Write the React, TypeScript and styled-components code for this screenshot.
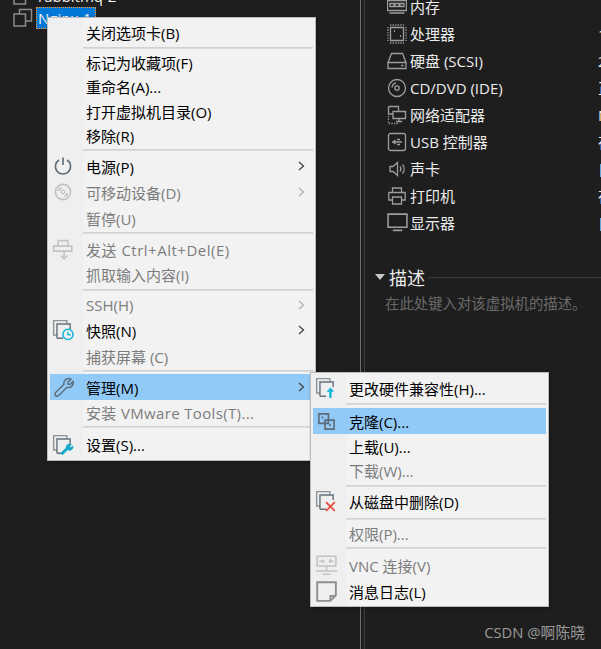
import React from 'react';
import styled, { createGlobalStyle } from 'styled-components';

const GlobalStyle = createGlobalStyle`
  html, body {
    margin: 0;
    padding: 0;
    background: #1e1e1e;
  }
  body {
    font-family: "Open Sans", "Noto Sans CJK SC", sans-serif;
    font-size: 15px;
  }
`;

const Page = styled.div`
  position: relative;
  display: flex;
  width: 601px;
  height: 649px;
  overflow: hidden;
  background: #1e1e1e;
`;

const Tree = styled.div`
  display: flex;
  flex-direction: column;
  width: 360px;
  margin-top: -15px;
  padding-left: 13px;
  box-sizing: border-box;
`;

const TreeRow = styled.div`
  display: flex;
  align-items: center;
  gap: 3px;
  height: 22px;
`;

const TreeLabel = styled.span<{ $selected?: boolean }>`
  display: block;
  padding: 0 3px 0 1px;
  line-height: 20px;
  color: #f4f4f4;
  border: 1px dotted ${(p) => (p.$selected ? '#ff9a2e' : 'transparent')};
  background: ${(p) => (p.$selected ? '#0078d7' : 'transparent')};
`;

const Rule = styled.div<{ $color: string; $gap: number }>`
  flex: none;
  width: 1px;
  margin-right: ${(p) => p.$gap}px;
  background: ${(p) => p.$color};
`;

const Details = styled.div`
  display: flex;
  flex-direction: column;
  flex: 1;
  min-width: 0;
  margin-top: -7px;
  overflow: hidden;
`;

const DeviceList = styled.div`
  display: flex;
  flex-direction: column;
  padding-left: 22px;
`;

const DeviceRow = styled.div`
  display: grid;
  grid-template-columns: 23px 188px auto;
  align-items: center;
  height: 27px;
  color: #ececec;
  white-space: nowrap;
`;

const SectionHead = styled.div`
  display: flex;
  align-items: center;
  margin-top: 28px;
  padding-left: 10px;
  font-size: 18px;
  color: #ececec;
`;

const Triangle = styled.span`
  width: 0;
  height: 0;
  margin-right: 4px;
  border-left: 5.5px solid transparent;
  border-right: 5.5px solid transparent;
  border-top: 6px solid #c8c8c8;
`;

const SectionLine = styled.span`
  flex: 1;
  height: 1px;
  margin-left: 3px;
  background: #3c3c3c;
`;

const Hint = styled.div`
  margin: 2px 0 0 20px;
  color: #6a6a6a;
  font-size: 14.4px;
  white-space: nowrap;
`;

const Menu = styled.div<{ $left: number; $top: number; $width: number }>`
  position: absolute;
  left: ${(p) => p.$left}px;
  top: ${(p) => p.$top}px;
  width: ${(p) => p.$width}px;
  box-sizing: border-box;
  display: flex;
  flex-direction: column;
  padding: 2px;
  background: linear-gradient(90deg, #efefef 35px, #f2f2f2 35px);
  border: 1px solid #bcbcbc;
  box-shadow: 1px 1px 3px rgba(0, 0, 0, 0.35);
`;

const Row = styled.div<{ $h: number; $active?: boolean; $off?: boolean; $track?: number }>`
  display: flex;
  align-items: center;
  height: ${(p) => p.$h}px;
  background: ${(p) => (p.$active ? '#91c9f7' : 'transparent')};
  color: ${(p) => (p.$off ? '#7c7c7c' : '#000')};
  letter-spacing: ${(p) => p.$track ?? 0}px;
  white-space: nowrap;
`;

const IconCell = styled.span`
  flex: none;
  display: flex;
  align-items: center;
  justify-content: center;
  width: 26px;
  margin-right: 10px;
`;

const RowLabel = styled.span`
  flex: 1;
`;

const Arrow = styled.span`
  display: flex;
  margin-right: 8px;
`;

const Separator = styled.div<{ $before: number; $after: number }>`
  height: 1px;
  margin: ${(p) => p.$before}px 0 ${(p) => p.$after}px 33px;
  background: #d2d2d2;
  box-shadow: 0 1px 0 #dcdcdc;
`;

const Watermark = styled.div`
  position: absolute;
  right: 16px;
  bottom: 7px;
  color: #9a9a9a;
  font-size: 14.8px;
`;

const Ico = ({ children, size = 20, color = '#66727d' }: { children: React.ReactNode; size?: number; color?: string }) => (
  <svg width={size} height={size} viewBox="0 0 20 20" fill="none" stroke={color} strokeWidth="1.3">
    {children}
  </svg>
);

const Windows = ({ color = '#66727d' }: { color?: string }) => (
  <>
    <path d="M4.5 14.5H1.5V1.5H13.5V4" stroke="#8d959c" />
    <path d="M4.5 17.5V4.5H16.5V9M10 17.5H4.5" stroke={color} />
  </>
);

const Power = () => (
  <Ico color="#5d6a76"><path strokeWidth="1.6" d="M6 4a7.6 7.6 0 1 0 8 0M10 1.5V9" /></Ico>
);
const Disc = () => (
  <Ico color="#c2c2c2"><circle cx="10" cy="10" r="7.6" strokeWidth="1.6" /><circle cx="10" cy="10" r="1.8" /><path strokeWidth="2" d="M5.5 9a4.5 4.5 0 0 1 3-3.4M14.5 11a4.5 4.5 0 0 1-3 3.4" /></Ico>
);
const SendKeys = () => (
  <Ico color="#c4c4c4" size={22}><path d="M5.5 1.5H14.5V6M1.5 6.5H18V11H1.5ZM5.5 6V1.5M11 11V17M8 15l3 3 3-3" strokeWidth="1.5" /></Ico>
);
const Snapshot = () => (
  <Ico size={22}><Windows /><circle cx="14.5" cy="14" r="4.6" fill="#f2f2f2" stroke="#13b5d8" strokeWidth="1.4" /><path d="M14.5 11.5V14.3H17" stroke="#13b5d8" /></Ico>
);
const Wrench = () => (
  <Ico size={22} color="#5a6d7e"><path strokeWidth="1.3" d="M12.2 3.6a4.4 4.4 0 0 1 5-.7L14.4 5.8l.2 1.8 1.8.2 2.8-2.8a4.4 4.4 0 0 1-5.6 5.3l-7.5 7.5a1.9 1.9 0 0 1-2.8-2.7l7.6-7.5a4.4 4.4 0 0 1 1.3-4.2Z" /></Ico>
);
const Settings = () => (
  <Ico size={22}><Windows /><path d="M8.5 18.5l6-6" stroke="#13a8cc" strokeWidth="2.6" /><path d="M13 12.5a3 3 0 0 1 4.5-3l-1.5 2 1 1 2-1.5a3 3 0 0 1-4 3.5Z" fill="#13a8cc" stroke="#13a8cc" strokeWidth="0.8" /></Ico>
);
const Upgrade = () => (
  <Ico size={22}><Windows /><path d="M14 19V12" stroke="#13b5d8" strokeWidth="2.2" /><path d="M10.5 13.5L14 9.5l3.5 4Z" fill="#13b5d8" stroke="none" /></Ico>
);
const Clone = () => (
  <Ico color="#5d6b77" size={19}><path strokeWidth="1.7" d="M2 2H12V12H2ZM8.5 8.5H18V18H8.5Z" /><path d="M5 5l1.5 1.5M13 13l1.5 1.5" strokeWidth="1.8" /></Ico>
);
const Remove = () => (
  <Ico size={22}><Windows /><path d="M10 11l8 8M18 11l-8 8" stroke="#e8453c" strokeWidth="1.5" /></Ico>
);
const Vnc = () => (
  <Ico size={22} color="#c2c2c2"><path strokeWidth="1.4" d="M2 2H19V11H2ZM1 15.5H20M10.5 11V15.5M7 18.5H14M4 6.5H8M6.5 5l1.5 1.5L6.5 8M17 6.5H13M14.5 5L13 6.5 14.5 8" /></Ico>
);
const Note = () => (
  <Ico size={22} color="#8f8f8f"><path strokeWidth="1.7" d="M2 2H19V14L14 19H2ZM14 19V14.5H19" /></Ico>
);
const ChevronRight = ({ color }: { color: string }) => (
  <svg width="7" height="10" viewBox="0 0 7 10" fill="none" stroke={color} strokeWidth="1.3"><path d="M1 1l4.5 4L1 9" /></svg>
);

const VmIcon = () => (
  <Ico color="#8a8a8a"><path strokeWidth="1.5" d="M1 6H12.5V18H1ZM6.5 6V1.5H18.5V13H12.5" /></Ico>
);

const Ram = () => <Ico color="#9d9d9d"><path d="M0.5 3.5H19.5V13.5H0.5ZM3 6.5H7V9.5H3ZM8 6.5H12V9.5H8ZM13 6.5H17V9.5H13ZM2.5 16H17.5" /></Ico>;
const Cpu = () => <Ico color="#9d9d9d"><path d="M3.5 3.5H16.5V16.5H3.5Z" /><path strokeDasharray="1.3 1.3" d="M3 1H17M3 19H17M1 3V17M19 3V17" /><path strokeWidth="1.8" d="M7 7h1M13 12h1" /></Ico>;
const Hdd = () => <Ico color="#9d9d9d"><path d="M4.5 2.5H15.5L19 11.5H1ZM1 11.5H19V17.5H1ZM14 14.5H16.5" /></Ico>;
const Cd = () => <Ico color="#9d9d9d"><circle cx="10" cy="10" r="8.5" /><circle cx="10" cy="10" r="2.2" /><path d="M5 9.5A5 5 0 0 1 9 5" /></Ico>;
const Network = () => <Ico color="#9d9d9d"><path d="M1.5 1.5H11.5V7M1.5 1.5V9H6M6 6.5H18.5V13.5H6ZM12 13.5V16M9 16.5H15" /><path strokeDasharray="1.3 1.3" d="M1.5 11V18.5H12" /></Ico>;
const Usb = () => <Ico color="#9d9d9d"><rect x="1.5" y="1.5" width="17" height="17" rx="2" /><path d="M5 10H15M6 10l2.5-2M6 10l2.5 2M10 7.5H13M10 12.5H13" /></Ico>;
const Speaker = () => <Ico color="#9d9d9d"><path d="M3 7.5H6L10.5 3.5V16.5L6 12.5H3ZM13 7.5a4 4 0 0 1 0 5M15.5 5.5a7 7 0 0 1 0 9" /></Ico>;
const Printer = () => <Ico color="#9d9d9d"><path d="M5.5 6.5V2H14.5V6.5M5 14H1.8V6.5H18.2V14H15M5.5 11H14.5V18H5.5Z" /></Ico>;
const Monitor = () => <Ico color="#9d9d9d" size={21}><path d="M1 2H19V14.5H1ZM5.5 17.5H14.5" strokeWidth="1.5" /></Ico>;

type Entry =
  | { sep: true; before: number; after: number }
  | { label: string; h: number; icon?: React.ReactNode; off?: boolean; active?: boolean; more?: boolean; track?: number };

const mainMenu: Entry[] = [
  { label: '关闭选项卡(B)', h: 25 },
  { sep: true, before: 2, after: 2 },
  { label: '标记为收藏项(F)', h: 24 },
  { label: '重命名(A)...', h: 25 },
  { label: '打开虚拟机目录(O)', h: 24 },
  { label: '移除(R)', h: 24 },
  { sep: true, before: 2, after: 3 },
  { label: '电源(P)', h: 26, icon: <Power />, more: true },
  { label: '可移动设备(D)', h: 26, icon: <Disc />, off: true, more: true },
  { label: '暂停(U)', h: 26, off: true },
  { sep: true, before: 1, after: 4 },
  { label: '发送 Ctrl+Alt+Del(E)', h: 25, icon: <SendKeys />, off: true, track: 0.5 },
  { label: '抓取输入内容(I)', h: 25, off: true },
  { sep: true, before: 2, after: 2 },
  { label: 'SSH(H)', h: 25, off: true, more: true },
  { label: '快照(N)', h: 26, icon: <Snapshot />, more: true },
  { label: '捕获屏幕 (C)', h: 26, off: true },
  { sep: true, before: 1, after: 3 },
  { label: '管理(M)', h: 26, icon: <Wrench />, active: true, more: true },
  { label: '安装 VMware Tools(T)...', h: 24, off: true, track: 0.35 },
  { sep: true, before: 2, after: 4 },
  { label: '设置(S)...', h: 27, icon: <Settings /> },
];

const subMenu: Entry[] = [
  { label: '更改硬件兼容性(H)...', h: 26, icon: <Upgrade /> },
  { sep: true, before: 2, after: 4 },
  { label: '克隆(C)...', h: 26, icon: <Clone />, active: true },
  { label: '上载(U)...', h: 25 },
  { label: '下载(W)...', h: 23, off: true },
  { sep: true, before: 3, after: 2 },
  { label: '从磁盘中删除(D)', h: 26, icon: <Remove /> },
  { sep: true, before: 4, after: 2 },
  { label: '权限(P)...', h: 25, off: true },
  { sep: true, before: 1, after: 4 },
  { label: 'VNC 连接(V)', h: 26, icon: <Vnc />, off: true },
  { label: '消息日志(L)', h: 26, icon: <Note /> },
];

const devices: [React.ReactNode, string, string][] = [
  [<Ram />, '内存', ''],
  [<Cpu />, '处理器', '1'],
  [<Hdd />, '硬盘 (SCSI)', '20 GB'],
  [<Cd />, 'CD/DVD (IDE)', '正在使用'],
  [<Network />, '网络适配器', 'NAT'],
  [<Usb />, 'USB 控制器', '存在'],
  [<Speaker />, '声卡', '自动检测'],
  [<Printer />, '打印机', '存在'],
  [<Monitor />, '显示器', '自动检测'],
];

function MenuItems({ items }: { items: Entry[] }): JSX.Element {
  return (
    <>
      {items.map((item, i) =>
        'sep' in item ? (
          <Separator key={i} $before={item.before} $after={item.after} />
        ) : (
          <Row key={i} $h={item.h} $active={item.active} $off={item.off} $track={item.track}>
            <IconCell>{item.icon}</IconCell>
            <RowLabel>{item.label}</RowLabel>
            {item.more && (
              <Arrow>
                <ChevronRight color={item.off ? '#b0b0b0' : '#444'} />
              </Arrow>
            )}
          </Row>
        )
      )}
    </>
  );
}

export default function App(): JSX.Element {
  return (
    <Page>
      <GlobalStyle />
      <Tree>
        <TreeRow>
          <VmIcon />
          <TreeLabel>rabbitmq-2</TreeLabel>
        </TreeRow>
        <TreeRow>
          <VmIcon />
          <TreeLabel $selected>Nginx-1</TreeLabel>
        </TreeRow>
      </Tree>
      <Rule $color="#6e6e6e" $gap={3} />
      <Rule $color="#3e3e3e" $gap={0} />
      <Details>
        <DeviceList>
          {devices.map(([icon, name, value]) => (
            <DeviceRow key={name}>
              {icon}
              <span>{name}</span>
              <span>{value}</span>
            </DeviceRow>
          ))}
        </DeviceList>
        <SectionHead>
          <Triangle />
          描述
          <SectionLine />
        </SectionHead>
        <Hint>在此处键入对该虚拟机的描述。</Hint>
      </Details>
      <Menu $left={47} $top={17} $width={269}>
        <MenuItems items={mainMenu} />
      </Menu>
      <Menu $left={310} $top={372} $width={239}>
        <MenuItems items={subMenu} />
      </Menu>
      <Watermark>CSDN @啊陈晓</Watermark>
    </Page>
  );
}
